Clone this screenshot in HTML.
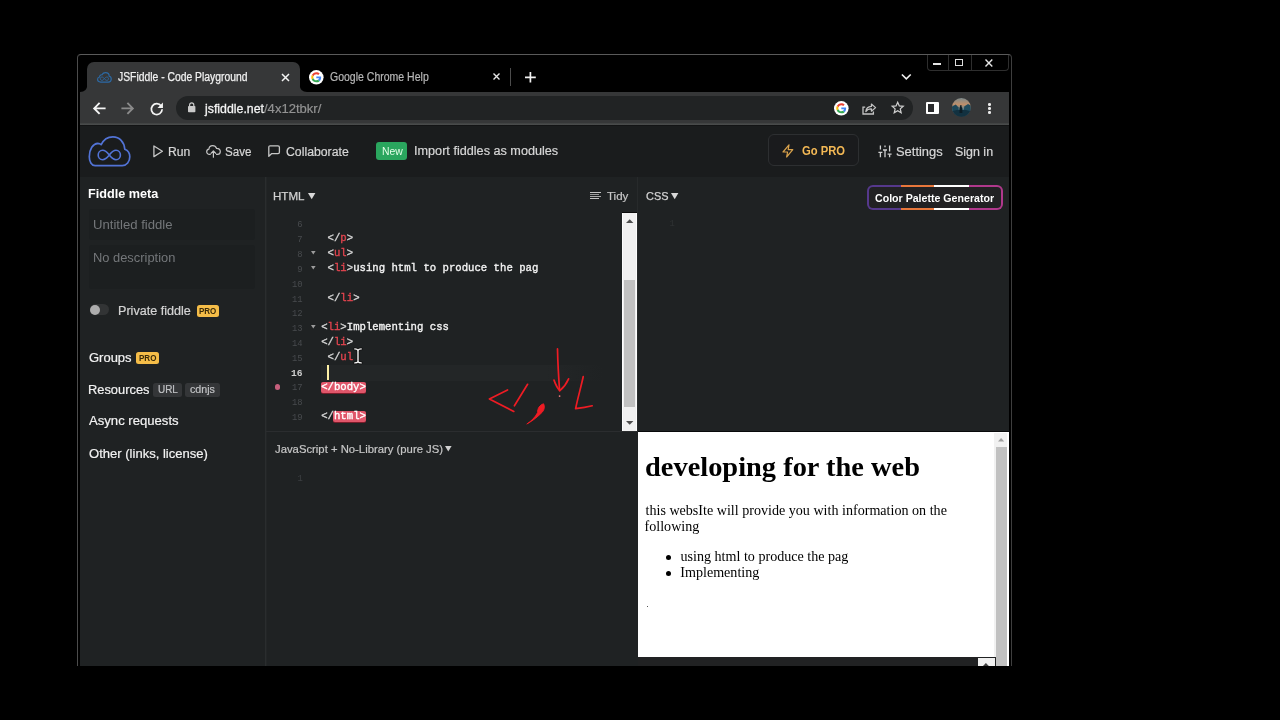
<!DOCTYPE html>
<html>
<head>
<meta charset="utf-8">
<title>JSFiddle - Code Playground</title>
<style>
*{box-sizing:border-box;margin:0;padding:0}
html,body{width:1280px;height:720px;overflow:hidden;background:#000}
body{font-family:"Liberation Sans",sans-serif;position:relative;color:#fff;background:transparent;will-change:transform}
.a{position:absolute}
.t{position:absolute;white-space:pre;line-height:1;transform-origin:0 0}
svg{position:absolute;overflow:visible}
#win{left:77px;top:54px;width:935px;height:612px;background:#000;border:1px solid #555;border-color:#5a5a5a #3e3e3e #000 #4c4c4c;border-bottom:none;border-radius:4px 4px 0 0}
#tab1{left:87px;top:62px;width:213px;height:30px;background:#363738;border-radius:7px 7px 0 0}
#toolbar{left:80px;top:92px;width:929px;height:32px;background:#363738}
#tbline{left:80px;top:123px;width:929px;height:2px;background:linear-gradient(#3e4040,#4c4e4e)}
#url{left:176px;top:96px;width:737px;height:24px;border-radius:12px;background:#212324}
#page{left:80px;top:125px;width:929px;height:541px;background:#1a1c1d;border-top:1px solid #131415}
#side{left:80px;top:177px;width:185px;height:489px;background:#1f2223}
#edit{left:265px;top:177px;width:744px;height:489px;background:#1f2223}
</style>
</head>
<body>
<div class="a" id="win"></div>
<div class="a" id="tab1"></div>
<div class="a" id="toolbar"></div>
<div class="a" id="tbline"></div>
<div class="a" id="url"></div>
<div class="a" id="page"></div>
<div class="a" id="side"></div>
<div class="a" id="edit"></div>
<!-- chrome -->
<!-- tab flares -->
<svg style="left:80px;top:85px" width="8" height="7" viewBox="0 0 8 7"><path d="M0 7 Q7 7 7.3 0 L8 0 L8 7 Z" fill="#363738"/></svg>
<svg style="left:299px;top:85px" width="8" height="7" viewBox="0 0 8 7"><path d="M8 7 Q1 7 0.7 0 L0 0 L0 7 Z" fill="#363738"/></svg>
<!-- favicon jsfiddle -->
<svg style="left:97.2px;top:71.5px" width="14.8" height="11" viewBox="0 0 16 12" preserveAspectRatio="none"><path d="M4 11 C1.6 11 0.6 9.6 0.6 8 C0.6 6.6 1.6 5.6 2.8 5.4 C2.8 3.8 4 2.8 5.4 3 C6.2 1.4 7.6 0.7 9.2 0.7 C11.6 0.7 13.2 2.4 13.2 4.6 C14.6 4.8 15.4 6.2 15.4 7.6 C15.4 9.6 14 11 12.2 11 Z" fill="none" stroke="#2c6aa6" stroke-width="1.25"/><path d="M8 7.3 C6.9 5.9 6.2 5.5 5.3 5.5 C4.3 5.5 3.5 6.3 3.5 7.3 C3.5 8.3 4.3 9.1 5.3 9.1 C6.3 9.1 7 8.6 8 7.3 C9 6 9.7 5.5 10.7 5.5 C11.7 5.5 12.5 6.3 12.5 7.3 C12.5 8.3 11.7 9.1 10.7 9.1 C9.8 9.1 9.1 8.7 8 7.3 Z" fill="none" stroke="#2c6aa6" stroke-width="0.95"/></svg>
<!-- tab1 close -->
<svg style="left:281px;top:73px" width="9" height="9" viewBox="0 0 9 9"><path d="M1 1 L8 8 M8 1 L1 8" stroke="#f4f4f4" stroke-width="1.5" fill="none"/></svg>
<!-- google favicon tab2 -->
<svg style="left:308.7px;top:69.6px" width="14.6" height="14.6" viewBox="0 0 48 48"><circle cx="24" cy="24" r="24" fill="#fff"/><g transform="translate(7.5 7.5) scale(0.69)"><path fill="#EA4335" d="M24 9.5c3.54 0 6.71 1.22 9.21 3.6l6.85-6.85C35.9 2.38 30.47 0 24 0 14.62 0 6.51 5.38 2.56 13.22l7.98 6.19C12.43 13.72 17.74 9.5 24 9.5z"/><path fill="#4285F4" d="M46.98 24.55c0-1.57-.15-3.09-.38-4.55H24v9.02h12.94c-.58 2.96-2.26 5.48-4.78 7.18l7.73 6c4.51-4.18 7.09-10.36 7.09-17.65z"/><path fill="#FBBC05" d="M10.53 28.59c-.48-1.45-.76-2.99-.76-4.59s.27-3.14.76-4.59l-7.98-6.19C.92 16.46 0 20.12 0 24c0 3.88.92 7.54 2.56 10.78l7.97-6.19z"/><path fill="#34A853" d="M24 48c6.48 0 11.93-2.13 15.89-5.81l-7.73-6c-2.15 1.45-4.92 2.3-8.16 2.3-6.26 0-11.57-4.22-13.47-9.91l-7.98 6.19C6.51 42.62 14.62 48 24 48z"/></g></svg>
<!-- tab2 close -->
<svg style="left:493px;top:73.4px" width="7" height="7" viewBox="0 0 7 7"><path d="M0.5 0.5 L6.5 6.5 M6.5 0.5 L0.5 6.5" stroke="#e6e6e6" stroke-width="1.4" fill="none"/></svg>
<div class="a" style="left:510px;top:68px;width:1px;height:18px;background:#4c4c4c"></div>
<!-- plus -->
<svg style="left:525px;top:72px" width="11" height="11" viewBox="0 0 11 11"><path d="M5.4 0 V10.6 M0 5.3 H10.8" stroke="#f0f0f0" stroke-width="1.7" fill="none"/></svg>
<!-- chevron -->
<svg style="left:901px;top:73px" width="11" height="8" viewBox="0 0 11 8"><path d="M0.9 1.5 L5.3 5.9 L9.7 1.5" stroke="#f0f0f0" stroke-width="1.6" fill="none"/></svg>
<!-- window controls -->
<div class="a" style="left:927px;top:55px;width:82px;height:16px;border:1px solid #2e2e2e;border-top:none;border-radius:0 0 4px 4px"></div>
<div class="a" style="left:948px;top:55px;width:1px;height:15px;background:#2e2e2e"></div>
<div class="a" style="left:971px;top:55px;width:1px;height:15px;background:#2e2e2e"></div>
<div class="a" style="left:932.6px;top:63.2px;width:8.8px;height:2px;background:#e4e4e4"></div>
<div class="a" style="left:955px;top:59px;width:8.4px;height:6.5px;border:1.3px solid #dcdcdc"></div>
<svg style="left:985px;top:58.5px" width="8" height="8" viewBox="0 0 8 8"><path d="M0.5 0.4 L7.3 7.4 M7.3 0.4 L0.5 7.4" stroke="#e4e4e4" stroke-width="1.4" fill="none"/></svg>
<!-- nav: back, forward, reload -->
<svg style="left:93px;top:101.6px" width="13" height="13" viewBox="0 0 13 13"><path d="M12.6 6.4 H1.6 M6.6 0.9 L1.2 6.4 L6.6 11.9" stroke="#f4f4f4" stroke-width="1.9" fill="none"/></svg>
<svg style="left:121.3px;top:101.6px" width="13" height="13" viewBox="0 0 13 13"><path d="M0.4 6.4 H11.4 M6.4 0.9 L11.8 6.4 L6.4 11.9" stroke="#8b8b8b" stroke-width="1.9" fill="none"/></svg>
<svg style="left:149.6px;top:101.5px" width="13.5" height="13.5" viewBox="0 0 14 14"><path d="M11.6 4.2 A5.6 5.6 0 1 0 12.6 7.6" stroke="#f4f4f4" stroke-width="1.8" fill="none"/><path d="M13.4 0.6 V6.2 H7.8 Z" fill="#f4f4f4"/></svg>
<!-- lock -->
<svg style="left:188px;top:102.3px" width="8" height="11" viewBox="0 0 8 11"><rect x="0" y="4" width="7.4" height="6.2" rx="0.8" fill="#c9c9c9"/><path d="M1.6 4.4 V2.9 A2.1 2.1 0 0 1 5.8 2.9 V4.4" stroke="#c9c9c9" stroke-width="1.2" fill="none"/></svg>
<!-- google G in omnibox -->
<svg style="left:833.5px;top:100.7px" width="14.6" height="14.6" viewBox="0 0 48 48"><circle cx="24" cy="24" r="24" fill="#fff"/><g transform="translate(7.5 7.5) scale(0.69)"><path fill="#EA4335" d="M24 9.5c3.54 0 6.71 1.22 9.21 3.6l6.85-6.85C35.9 2.38 30.47 0 24 0 14.62 0 6.51 5.38 2.56 13.22l7.98 6.19C12.43 13.72 17.74 9.5 24 9.5z"/><path fill="#4285F4" d="M46.98 24.55c0-1.57-.15-3.09-.38-4.55H24v9.02h12.94c-.58 2.96-2.26 5.48-4.78 7.18l7.73 6c4.51-4.18 7.09-10.36 7.09-17.65z"/><path fill="#FBBC05" d="M10.53 28.59c-.48-1.45-.76-2.99-.76-4.59s.27-3.14.76-4.59l-7.98-6.19C.92 16.46 0 20.12 0 24c0 3.88.92 7.54 2.56 10.78l7.97-6.19z"/><path fill="#34A853" d="M24 48c6.48 0 11.93-2.13 15.89-5.81l-7.73-6c-2.15 1.45-4.92 2.3-8.16 2.3-6.26 0-11.57-4.22-13.47-9.91l-7.98 6.19C6.51 42.62 14.62 48 24 48z"/></g></svg>
<!-- share -->
<svg style="left:862px;top:102px" width="15" height="13" viewBox="0 0 15 13"><path d="M3.2 5.2 H1 V12 H11.4 V9.6" stroke="#c4c4c4" stroke-width="1.3" fill="none"/><path d="M3.8 9.6 C4.2 6.4 6.2 4.6 9.4 4.4 V2 L13.6 5.6 L9.4 9.2 V6.9 C6.9 6.8 5.2 7.6 3.8 9.6 Z" stroke="#c4c4c4" stroke-width="1.2" fill="none" stroke-linejoin="round"/></svg>
<!-- star -->
<svg style="left:890.6px;top:101.2px" width="13.4" height="13" viewBox="0 0 24 23"><path d="M12 2.2 L14.9 8.6 L21.9 9.3 L16.6 14 L18.2 20.9 L12 17.3 L5.8 20.9 L7.4 14 L2.1 9.3 L9.1 8.6 Z" stroke="#d0d0d0" stroke-width="2.2" fill="none" stroke-linejoin="miter"/></svg>
<!-- side panel -->
<div class="a" style="left:926px;top:101.7px;width:13px;height:12.6px;background:#fff;border-radius:1px"></div>
<div class="a" style="left:928.4px;top:103.6px;width:5.4px;height:8.8px;background:#2a2b2d"></div>
<!-- avatar -->
<svg style="left:951.6px;top:98.4px" width="18.8" height="18.8" viewBox="0 0 20 20"><defs><clipPath id="av"><circle cx="10" cy="10" r="10"/></clipPath><linearGradient id="sky" x1="0" y1="0" x2="0" y2="1"><stop offset="0" stop-color="#7c8a8c"/><stop offset="0.35" stop-color="#c08f6a"/><stop offset="0.6" stop-color="#5a7e8a"/><stop offset="1" stop-color="#143647"/></linearGradient></defs><g clip-path="url(#av)"><rect width="20" height="20" fill="url(#sky)"/><path d="M0 9 L4 7 L7 10 L7 20 L0 20 Z" fill="#1d4658"/><path d="M13 9 L17 6.5 L20 8 L20 20 L12 20 Z" fill="#214c5e"/><path d="M0 14 Q10 11 20 14 L20 20 L0 20 Z" fill="#123140"/><path d="M8.6 7.6 h1.6 v2 l0.8 1 v5.4 h-3 v-5.6 l0.6-0.8 Z" fill="#0d1c24"/></g></svg>
<!-- kebab -->
<div class="a" style="left:988.2px;top:103.05px;width:2.7px;height:2.7px;border-radius:50%;background:#ececec"></div>
<div class="a" style="left:988.2px;top:107.15px;width:2.7px;height:2.7px;border-radius:50%;background:#ececec"></div>
<div class="a" style="left:988.2px;top:111.25px;width:2.7px;height:2.7px;border-radius:50%;background:#ececec"></div>
<span class="t" style="left:118.34px;top:71px;font-size:12px;color:#f0f0f0;transform:scaleX(0.8626);-webkit-text-stroke:0.25px #f0f0f0;">JSFiddle - Code Playground</span>
<span class="t" style="left:330.34px;top:71px;font-size:12px;color:#b6b6b6;transform:scaleX(0.8758);-webkit-text-stroke:0.2px #b6b6b6;">Google Chrome Help</span>
<span class="t" style="left:205.46px;top:102px;font-size:13.5px;color:#f4f4f4;transform:scaleX(0.9142);-webkit-text-stroke:0.3px #f4f4f4;">jsfiddle.net</span>
<span class="t" style="left:264.49px;top:102px;font-size:13.5px;color:#939393;transform:scaleX(0.9663);-webkit-text-stroke:0.2px #939393;">/4x12tbkr/</span>
<!-- header -->
<!-- jsfiddle logo -->
<svg style="left:88px;top:136px" width="44" height="31" viewBox="0 0 44 31"><path d="M7.1 29.6 C3.5 29.6 1.3 25.5 1.3 20.7 C1.3 13 5 7.6 9.9 7.3 C11.2 7.3 12.4 7.9 13.2 8.7 C15.5 3.8 19.8 0.9 24.9 0.9 C31.5 0.9 36.3 5.9 36.8 13.2 C39.8 14.4 41.8 17.3 41.8 20.7 C41.8 25.6 38.6 29.6 34.3 29.6 Z" fill="none" stroke="#5273d6" stroke-width="1.7" stroke-linejoin="round"/><path d="M21.3 19 C18.6 15.6 16.6 14.3 14.6 14.3 C12 14.3 10.2 16.4 10.2 19 C10.2 21.6 12 23.7 14.6 23.7 C16.9 23.7 18.8 22.2 21.3 19 C23.8 15.8 25.7 14.3 28 14.3 C30.6 14.3 32.4 16.4 32.4 19 C32.4 21.6 30.6 23.7 28 23.7 C26 23.7 24 22.4 21.3 19 Z" fill="none" stroke="#5273d6" stroke-width="1.6"/></svg>
<!-- run -->
<svg style="left:153px;top:145px" width="11" height="13" viewBox="0 0 11 13"><path d="M0.9 1 L9.4 6.3 L0.9 11.6 Z" fill="none" stroke="#c6c6c6" stroke-width="1.3" stroke-linejoin="round"/></svg>
<!-- save cloud upload -->
<svg style="left:206px;top:144.6px" width="15" height="13" viewBox="0 0 15 13"><path d="M4.2 9.4 H3.6 C1.8 9.4 0.7 8.2 0.7 6.7 C0.7 5.3 1.7 4.3 2.9 4.1 C3.1 2.1 4.7 0.7 6.7 0.7 C8.5 0.7 9.9 1.7 10.5 3.3 C12.7 3.3 14.3 4.7 14.3 6.5 C14.3 8.2 13 9.4 11.4 9.4 H10.6" fill="none" stroke="#c6c6c6" stroke-width="1.2" stroke-linecap="round"/><path d="M7.4 12.2 V6.2 M5 8.4 L7.4 6 L9.8 8.4" fill="none" stroke="#c6c6c6" stroke-width="1.2" stroke-linecap="round" stroke-linejoin="round"/></svg>
<!-- collaborate chat -->
<svg style="left:268px;top:145.3px" width="13" height="13" viewBox="0 0 13 13"><path d="M2.2 0.8 H10 Q11.4 0.8 11.4 2.2 V7.2 Q11.4 8.6 10 8.6 H3.8 L0.8 11.2 V2.2 Q0.8 0.8 2.2 0.8 Z" fill="none" stroke="#c6c6c6" stroke-width="1.3" stroke-linejoin="round"/></svg>
<!-- new badge -->
<div class="a" style="left:376.3px;top:142.3px;width:31px;height:17.8px;background:#2aa65e;border-radius:3px"></div>
<!-- go pro -->
<div class="a" style="left:768px;top:134px;width:91px;height:32.4px;border:1px solid #2d2f31;border-radius:6px;background:#1a1b1d"></div>
<svg style="left:782px;top:143.6px" width="12" height="14" viewBox="0 0 12 14"><path d="M7 0.8 L1 8 H5.6 L4.6 13 L10.8 5.6 H6.2 Z" fill="none" stroke="#d9a24c" stroke-width="1.2" stroke-linejoin="round"/></svg>
<!-- settings sliders -->
<svg style="left:878px;top:145px" width="14" height="13" viewBox="0 0 14 13"><path d="M2.4 0.4 V4.6 M2.4 7.4 V12.2 M7 0.4 V2.2 M7 5 V12.2 M11.6 0.4 V6.4 M11.6 9.2 V12.2" stroke="#d0d0d0" stroke-width="1.3" fill="none"/><path d="M0.4 7.4 H4.4 M5 5 H9 M9.6 9.2 H13.6" stroke="#d0d0d0" stroke-width="1.3" fill="none"/></svg>
<!-- color palette generator -->
<div class="a" style="left:867px;top:184.9px;width:136px;height:25.6px;border-radius:6px;background:linear-gradient(90deg,#55388c 0,#55388c 24.8%,#e8773b 24.8%,#e8773b 49.3%,#fff 49.3%,#fff 75%,#b0388c 75%,#b0388c 100%)"></div>
<div class="a" style="left:869px;top:186.9px;width:132px;height:21.6px;border-radius:4px;background:#212123"></div>
<span class="t" style="left:168.39px;top:146px;font-size:12px;color:#d6d6d6;transform:scaleX(1.0139);-webkit-text-stroke:0.2px #d6d6d6;">Run</span>
<span class="t" style="left:224.58px;top:146px;font-size:12px;color:#d6d6d6;transform:scaleX(0.9672);-webkit-text-stroke:0.2px #d6d6d6;">Save</span>
<span class="t" style="left:286.10px;top:146px;font-size:12px;color:#d6d6d6;transform:scaleX(1.0225);-webkit-text-stroke:0.2px #d6d6d6;">Collaborate</span>
<span class="t" style="left:381.78px;top:146px;font-size:10.5px;color:#e6ffe9;transform:scaleX(0.9903);">New</span>
<span class="t" style="left:414.15px;top:145px;font-size:12px;color:#d6d6d6;transform:scaleX(1.0546);-webkit-text-stroke:0.2px #d6d6d6;">Import fiddles as modules</span>
<span class="t" style="left:801.91px;top:145px;font-size:12px;color:#f3b855;font-weight:700;transform:scaleX(0.9360);">Go PRO</span>
<span class="t" style="left:896.17px;top:146px;font-size:12px;color:#d6d6d6;transform:scaleX(1.0759);-webkit-text-stroke:0.2px #d6d6d6;">Settings</span>
<span class="t" style="left:955.01px;top:146px;font-size:12px;color:#d6d6d6;transform:scaleX(1.0374);-webkit-text-stroke:0.2px #d6d6d6;">Sign in</span>
<span class="t" style="left:875.27px;top:193px;font-size:10.5px;color:#ffffff;font-weight:700;transform:scaleX(1.0102);">Color Palette Generator</span>
<!-- side -->
<div class="a" style="left:89px;top:209px;width:166px;height:30.5px;background:#1c1f20;border-radius:3px"></div>
<div class="a" style="left:89px;top:245.3px;width:166px;height:44px;background:#1c1f20;border-radius:3px"></div>
<!-- toggle -->
<div class="a" style="left:89.6px;top:304.4px;width:19.6px;height:10.8px;border-radius:6px;background:#323435"></div>
<div class="a" style="left:89.6px;top:304.5px;width:10.6px;height:10.6px;border-radius:50%;background:#adadad"></div>
<!-- pro badges -->
<div class="a" style="left:196.8px;top:305px;width:22.4px;height:11.8px;border-radius:2.5px;background:#f5bd48"></div>
<div class="a" style="left:136.4px;top:352px;width:22.6px;height:11.9px;border-radius:2.5px;background:#f5bd48"></div>
<!-- url / cdnjs -->
<div class="a" style="left:153px;top:383px;width:28.7px;height:14px;border-radius:2.5px;background:#343638"></div>
<div class="a" style="left:185.4px;top:383px;width:35px;height:14px;border-radius:2.5px;background:#343638"></div>
<span class="t" style="left:88.14px;top:188px;font-size:12.5px;color:#ffffff;font-weight:700;transform:scaleX(1.0121);">Fiddle meta</span>
<span class="t" style="left:93.01px;top:219px;font-size:12px;color:#74777a;transform:scaleX(1.0935);">Untitled fiddle</span>
<span class="t" style="left:93.03px;top:252px;font-size:12px;color:#74777a;transform:scaleX(1.0733);">No description</span>
<span class="t" style="left:117.67px;top:305px;font-size:12.3px;color:#d4d4d4;transform:scaleX(1.0237);-webkit-text-stroke:0.2px #d4d4d4;">Private fiddle</span>
<span class="t" style="left:199.27px;top:307px;font-size:8.5px;color:#3a2a08;font-weight:700;transform:scaleX(0.9409);">PRO</span>
<span class="t" style="left:88.73px;top:352px;font-size:12.5px;color:#f2f2f2;transform:scaleX(1.0389);-webkit-text-stroke:0.2px #f2f2f2;">Groups</span>
<span class="t" style="left:138.66px;top:354px;font-size:8.5px;color:#3a2a08;font-weight:700;transform:scaleX(0.9430);">PRO</span>
<span class="t" style="left:88.44px;top:384px;font-size:12.5px;color:#f2f2f2;transform:scaleX(1.0288);-webkit-text-stroke:0.2px #f2f2f2;">Resources</span>
<span class="t" style="left:158.04px;top:385px;font-size:10px;color:#c0c2c4;transform:scaleX(0.9929);-webkit-text-stroke:0.2px #c0c2c4;">URL</span>
<span class="t" style="left:190.38px;top:385px;font-size:10px;color:#c0c2c4;transform:scaleX(1.0673);-webkit-text-stroke:0.2px #c0c2c4;">cdnjs</span>
<span class="t" style="left:89.09px;top:415px;font-size:12.5px;color:#f2f2f2;transform:scaleX(1.0486);-webkit-text-stroke:0.2px #f2f2f2;">Async requests</span>
<span class="t" style="left:88.78px;top:448px;font-size:12.5px;color:#f2f2f2;transform:scaleX(1.0437);-webkit-text-stroke:0.2px #f2f2f2;">Other (links, license)</span>
<!-- editor -->
<!-- dividers -->
<div class="a" style="left:265px;top:177px;width:1px;height:489px;background:#2a2d2e"></div><div class="a" style="left:266px;top:177px;width:1px;height:489px;background:#232627"></div>
<div class="a" style="left:637px;top:177px;width:1px;height:255px;background:#272a2b"></div>
<div class="a" style="left:266px;top:431px;width:372px;height:1px;background:#2b2d2f"></div>
<!-- dropdown triangles -->
<svg style="left:308.4px;top:193px" width="8" height="7" viewBox="0 0 8 7"><path d="M0 0 H7.4 L3.7 6.2 Z" fill="#d8d8d8"/></svg>
<svg style="left:671.4px;top:193px" width="8" height="7" viewBox="0 0 8 7"><path d="M0 0 H7.4 L3.7 6.2 Z" fill="#d8d8d8"/></svg>
<svg style="left:445.4px;top:446.3px" width="7" height="6" viewBox="0 0 7 6"><path d="M0 0 H6.6 L3.3 5.6 Z" fill="#d0d0d0"/></svg>
<!-- tidy icon -->
<div class="a" style="left:590.3px;top:192px;width:10.6px;height:1px;background:#c4c4c4"></div><div class="a" style="left:590.3px;top:194px;width:8.8px;height:1px;background:#9a9a9a"></div><div class="a" style="left:590.3px;top:196px;width:10.6px;height:1px;background:#a8a8a8"></div><div class="a" style="left:590.3px;top:198px;width:8.5px;height:1px;background:#c4c4c4"></div>
<!-- active line -->
<div class="a" style="left:321px;top:365.4px;width:282px;height:15.2px;background:linear-gradient(90deg,#232627 0,#232627 80%,#1f2223 100%)"></div>
<!-- html scrollbar -->
<div class="a" style="left:622px;top:212px;width:15px;height:1px;background:#0a0a0a"></div>
<div class="a" style="left:622px;top:213px;width:15px;height:217.5px;background:#f0f0f0;border-left:1px solid #fcfcfc;border-right:1px solid #fcfcfc"></div>
<div class="a" style="left:624px;top:280px;width:11px;height:126.6px;background:#c1c1c1"></div>
<svg style="left:626.2px;top:219.3px" width="8" height="4" viewBox="0 0 8 4"><path d="M0 4 L3.7 0.2 L7.4 4 Z" fill="#4d4d4d"/></svg>
<svg style="left:626.2px;top:421.3px" width="8" height="4" viewBox="0 0 8 4"><path d="M0 0 L3.7 3.8 L7.4 0 Z" fill="#4d4d4d"/></svg>
<div class="a" style="left:320.8px;top:381.6px;width:45.4px;height:11.9px;background:#e0566a;border-radius:2px;box-shadow:0 1px 0 #7a1c2a"></div>
<div class="a" style="left:333.4px;top:410.6px;width:32.8px;height:11.9px;background:#e0566a;border-radius:2px;box-shadow:0 1px 0 #7a1c2a"></div>
<span class="t" style="right:977.4px;top:221px;font-family:'Liberation Mono',monospace;font-size:8.8px;color:#484b4e">6</span>
<span class="t" style="right:977.4px;top:236px;font-family:'Liberation Mono',monospace;font-size:8.8px;color:#484b4e">7</span>
<span class="t" style="left:327.59px;top:233px;font-family:'Liberation Mono',monospace;font-size:10.65px;-webkit-text-stroke:0.35px #d6d6d6;letter-spacing:0.000px;color:#d6d6d6">&lt;/</span>
<span class="t" style="left:340.37px;top:233px;font-family:'Liberation Mono',monospace;font-size:10.65px;-webkit-text-stroke:0.35px #e2444e;letter-spacing:0.000px;color:#e2444e">p</span>
<span class="t" style="left:346.76px;top:233px;font-family:'Liberation Mono',monospace;font-size:10.65px;-webkit-text-stroke:0.35px #d6d6d6;letter-spacing:0.000px;color:#d6d6d6">&gt;</span>
<span class="t" style="right:977.4px;top:251px;font-family:'Liberation Mono',monospace;font-size:8.8px;color:#484b4e">8</span>
<span class="t" style="left:327.59px;top:248px;font-family:'Liberation Mono',monospace;font-size:10.65px;-webkit-text-stroke:0.35px #d6d6d6;letter-spacing:0.000px;color:#d6d6d6">&lt;</span>
<span class="t" style="left:333.98px;top:248px;font-family:'Liberation Mono',monospace;font-size:10.65px;-webkit-text-stroke:0.35px #e2444e;letter-spacing:0.000px;color:#e2444e">ul</span>
<span class="t" style="left:346.76px;top:248px;font-family:'Liberation Mono',monospace;font-size:10.65px;-webkit-text-stroke:0.35px #d6d6d6;letter-spacing:0.000px;color:#d6d6d6">&gt;</span>
<svg style="left:310.6px;top:251.38px" width="5" height="4" viewBox="0 0 5 4"><path d="M0 0 H4.6 L2.3 3.6 Z" fill="#9c9c9c"/></svg>
<span class="t" style="right:977.4px;top:266px;font-family:'Liberation Mono',monospace;font-size:8.8px;color:#484b4e">9</span>
<span class="t" style="left:327.59px;top:263px;font-family:'Liberation Mono',monospace;font-size:10.65px;-webkit-text-stroke:0.35px #d6d6d6;letter-spacing:0.000px;color:#d6d6d6">&lt;</span>
<span class="t" style="left:333.98px;top:263px;font-family:'Liberation Mono',monospace;font-size:10.65px;-webkit-text-stroke:0.35px #e2444e;letter-spacing:0.000px;color:#e2444e">li</span>
<span class="t" style="left:346.76px;top:263px;font-family:'Liberation Mono',monospace;font-size:10.65px;-webkit-text-stroke:0.35px #d6d6d6;letter-spacing:0.000px;color:#d6d6d6">&gt;</span>
<span class="t" style="left:353.15px;top:263px;font-family:'Liberation Mono',monospace;font-size:10.65px;-webkit-text-stroke:0.35px #f2f2f2;letter-spacing:0.000px;color:#f2f2f2">using html to produce the pag</span>
<svg style="left:310.6px;top:266.19px" width="5" height="4" viewBox="0 0 5 4"><path d="M0 0 H4.6 L2.3 3.6 Z" fill="#9c9c9c"/></svg>
<span class="t" style="right:977.4px;top:281px;font-family:'Liberation Mono',monospace;font-size:8.8px;color:#484b4e">10</span>
<span class="t" style="right:977.4px;top:296px;font-family:'Liberation Mono',monospace;font-size:8.8px;color:#484b4e">11</span>
<span class="t" style="left:327.59px;top:293px;font-family:'Liberation Mono',monospace;font-size:10.65px;-webkit-text-stroke:0.35px #d6d6d6;letter-spacing:0.000px;color:#d6d6d6">&lt;/</span>
<span class="t" style="left:340.37px;top:293px;font-family:'Liberation Mono',monospace;font-size:10.65px;-webkit-text-stroke:0.35px #e2444e;letter-spacing:0.000px;color:#e2444e">li</span>
<span class="t" style="left:353.15px;top:293px;font-family:'Liberation Mono',monospace;font-size:10.65px;-webkit-text-stroke:0.35px #d6d6d6;letter-spacing:0.000px;color:#d6d6d6">&gt;</span>
<span class="t" style="right:977.4px;top:310px;font-family:'Liberation Mono',monospace;font-size:8.8px;color:#484b4e">12</span>
<span class="t" style="right:977.4px;top:325px;font-family:'Liberation Mono',monospace;font-size:8.8px;color:#484b4e">13</span>
<span class="t" style="left:321.20px;top:322px;font-family:'Liberation Mono',monospace;font-size:10.65px;-webkit-text-stroke:0.35px #d6d6d6;letter-spacing:0.000px;color:#d6d6d6">&lt;</span>
<span class="t" style="left:327.59px;top:322px;font-family:'Liberation Mono',monospace;font-size:10.65px;-webkit-text-stroke:0.35px #e2444e;letter-spacing:0.000px;color:#e2444e">li</span>
<span class="t" style="left:340.37px;top:322px;font-family:'Liberation Mono',monospace;font-size:10.65px;-webkit-text-stroke:0.35px #d6d6d6;letter-spacing:0.000px;color:#d6d6d6">&gt;</span>
<span class="t" style="left:346.76px;top:322px;font-family:'Liberation Mono',monospace;font-size:10.65px;-webkit-text-stroke:0.35px #f2f2f2;letter-spacing:0.000px;color:#f2f2f2">Implementing css</span>
<svg style="left:310.6px;top:325.43px" width="5" height="4" viewBox="0 0 5 4"><path d="M0 0 H4.6 L2.3 3.6 Z" fill="#9c9c9c"/></svg>
<span class="t" style="right:977.4px;top:340px;font-family:'Liberation Mono',monospace;font-size:8.8px;color:#484b4e">14</span>
<span class="t" style="left:321.20px;top:337px;font-family:'Liberation Mono',monospace;font-size:10.65px;-webkit-text-stroke:0.35px #d6d6d6;letter-spacing:0.000px;color:#d6d6d6">&lt;/</span>
<span class="t" style="left:333.98px;top:337px;font-family:'Liberation Mono',monospace;font-size:10.65px;-webkit-text-stroke:0.35px #e2444e;letter-spacing:0.000px;color:#e2444e">li</span>
<span class="t" style="left:346.76px;top:337px;font-family:'Liberation Mono',monospace;font-size:10.65px;-webkit-text-stroke:0.35px #d6d6d6;letter-spacing:0.000px;color:#d6d6d6">&gt;</span>
<span class="t" style="right:977.4px;top:355px;font-family:'Liberation Mono',monospace;font-size:8.8px;color:#484b4e">15</span>
<span class="t" style="left:327.59px;top:352px;font-family:'Liberation Mono',monospace;font-size:10.65px;-webkit-text-stroke:0.35px #d6d6d6;letter-spacing:0.000px;color:#d6d6d6">&lt;/</span>
<span class="t" style="left:340.37px;top:352px;font-family:'Liberation Mono',monospace;font-size:10.65px;-webkit-text-stroke:0.35px #e2444e;letter-spacing:0.000px;color:#e2444e">ul</span>
<span class="t" style="right:977.4px;top:369px;font-family:'Liberation Mono',monospace;font-size:9.6px;font-weight:700;color:#d0d0d0">16</span>
<span class="t" style="right:977.4px;top:384px;font-family:'Liberation Mono',monospace;font-size:8.8px;color:#484b4e">17</span>
<span class="t" style="left:321.20px;top:382px;font-family:'Liberation Mono',monospace;font-size:10.65px;-webkit-text-stroke:0.35px #fff;letter-spacing:0.000px;color:#fff">&lt;/body&gt;</span>
<span class="t" style="right:977.4px;top:399px;font-family:'Liberation Mono',monospace;font-size:8.8px;color:#484b4e">18</span>
<span class="t" style="right:977.4px;top:414px;font-family:'Liberation Mono',monospace;font-size:8.8px;color:#484b4e">19</span>
<span class="t" style="left:321.20px;top:411px;font-family:'Liberation Mono',monospace;font-size:10.65px;-webkit-text-stroke:0.35px #d6d6d6;letter-spacing:0.000px;color:#d6d6d6">&lt;/</span>
<span class="t" style="left:333.98px;top:411px;font-family:'Liberation Mono',monospace;font-size:10.65px;-webkit-text-stroke:0.35px #fff;letter-spacing:0.000px;color:#fff">html&gt;</span>
<span class="t" style="left:669.6px;top:220.4px;font-family:'Liberation Mono',monospace;font-size:8.8px;color:#2e3132">1</span>
<span class="t" style="left:297.4px;top:474.6px;font-family:'Liberation Mono',monospace;font-size:8.8px;color:#3c3f42">1</span>
<div class="a" style="left:274.6px;top:384.4px;width:5.2px;height:5.2px;border-radius:50%;background:#c65f7c"></div>
<div class="a" style="left:326.9px;top:365.4px;width:2px;height:15px;background:#fdf0a6"></div>
<svg style="left:353.5px;top:347.6px" width="8" height="16" viewBox="0 0 8 16"><path d="M0.8 0.9 C2.6 0.9 3.6 1.4 4 2.4 C4.4 1.4 5.4 0.9 7.2 0.9 M0.8 14.9 C2.6 14.9 3.6 14.4 4 13.4 C4.4 14.4 5.4 14.9 7.2 14.9 M4 2.4 V13.4" fill="none" stroke="#0c0c0c" stroke-width="2.8" stroke-linecap="round"/><path d="M0.8 0.9 C2.6 0.9 3.6 1.4 4 2.4 C4.4 1.4 5.4 0.9 7.2 0.9 M0.8 14.9 C2.6 14.9 3.6 14.4 4 13.4 C4.4 14.4 5.4 14.9 7.2 14.9 M4 2.4 V13.4" fill="none" stroke="#ffffff" stroke-width="1.35" stroke-linecap="round"/></svg>
<svg style="left:470px;top:335px" width="160" height="100" viewBox="0 0 160 100"><g fill="none" stroke="#ee1c24" stroke-width="1.7" stroke-linecap="round" stroke-linejoin="round"><path d="M37.5 54.9 L19.4 63.9 L43.8 76.4"/><path d="M57.6 49.3 L44.4 70.8"/><path d="M87.5 13.9 C87.8 28 88.6 42 89.6 55.6"/><path d="M84 45.1 C85.6 49.6 87.6 53.4 89.8 55.6 C93.4 52.6 96.6 48.4 98.6 43.8"/><path d="M113.2 41.7 C111 52 108 62 105.6 73.6 C111.6 73 117.6 72 122.2 70.8"/></g><path d="M56.8 89 C61 86.4 65 82.6 67.6 77.6 C67.4 73.6 69.6 70 73.6 68.8 C75 71.6 74.4 75.2 72 77.4 C68.4 81 63.6 85.4 56.8 89 Z" fill="#ee1c24" stroke="#ee1c24" stroke-width="0.9" stroke-linejoin="round"/><circle cx="89.6" cy="61.1" r="0.9" fill="#f07a7e"/></svg>

<span class="t" style="left:273.15px;top:191px;font-size:11px;color:#d2d2d2;transform:scaleX(1.0526);-webkit-text-stroke:0.25px #d2d2d2;">HTML</span>
<span class="t" style="left:606.72px;top:191px;font-size:11px;color:#c6c6c6;transform:scaleX(1.0469);-webkit-text-stroke:0.2px #c6c6c6;">Tidy</span>
<span class="t" style="left:646.24px;top:191px;font-size:11px;color:#d2d2d2;transform:scaleX(0.9924);-webkit-text-stroke:0.25px #d2d2d2;">CSS</span>
<span class="t" style="left:275.16px;top:444px;font-size:11px;color:#c6c6c6;transform:scaleX(1.0277);-webkit-text-stroke:0.2px #c6c6c6;">JavaScript + No-Library (pure JS)</span>
<!-- result -->
<div class="a" style="left:638px;top:432px;width:371px;height:234px;background:#212223"></div>
<div class="a" style="left:638px;top:431px;width:371px;height:1px;background:#08090a"></div>
<div class="a" style="left:638px;top:432px;width:371px;height:225px;background:#fff"></div>
<!-- result scrollbar -->
<div class="a" style="left:994px;top:433px;width:13px;height:224px;background:#f1f1f1"></div>
<div class="a" style="left:995.5px;top:447px;width:11.5px;height:219px;background:#c1c1c1"></div>
<div class="a" style="left:1007px;top:657px;width:2px;height:9px;background:#fff"></div>
<svg style="left:998px;top:437.8px" width="7" height="4" viewBox="0 0 7 4"><path d="M0 3.4 L3.1 0 L6.2 3.4 Z" fill="#a0a0a0"/></svg>
<!-- bottom corner button -->
<div class="a" style="left:978px;top:658px;width:17px;height:8px;background:#f0f0f0"></div>
<svg style="left:983.4px;top:663.2px" width="6" height="3" viewBox="0 0 6 3"><path d="M0 3 L2.9 0 L5.8 3 Z" fill="#404040"/></svg>
<!-- bullets -->
<div class="a" style="left:665.7px;top:554.6px;width:5.2px;height:5.2px;border-radius:50%;background:#000"></div>
<div class="a" style="left:665.7px;top:570.7px;width:5.2px;height:5.2px;border-radius:50%;background:#000"></div>
<div class="a" style="left:646.5px;top:605.6px;width:1.2px;height:1.2px;background:#555"></div>
<span class="t" style="left:644.71px;top:453px;font-size:28.2px;color:#000;font-weight:700;font-family:'Liberation Serif',serif;transform:scaleX(1.0082);">developing for the web</span>
<span class="t" style="left:645.50px;top:503px;font-size:14.1px;color:#000;font-family:'Liberation Serif',serif;">this websIte will provide you with information on the</span>
<span class="t" style="left:644.54px;top:519px;font-size:14.1px;color:#000;font-family:'Liberation Serif',serif;">following</span>
<span class="t" style="left:680.51px;top:549px;font-size:14.1px;color:#000;font-family:'Liberation Serif',serif;">using html to produce the pag</span>
<span class="t" style="left:680.28px;top:565px;font-size:14.1px;color:#000;font-family:'Liberation Serif',serif;">Implementing</span>
</body>
</html>
